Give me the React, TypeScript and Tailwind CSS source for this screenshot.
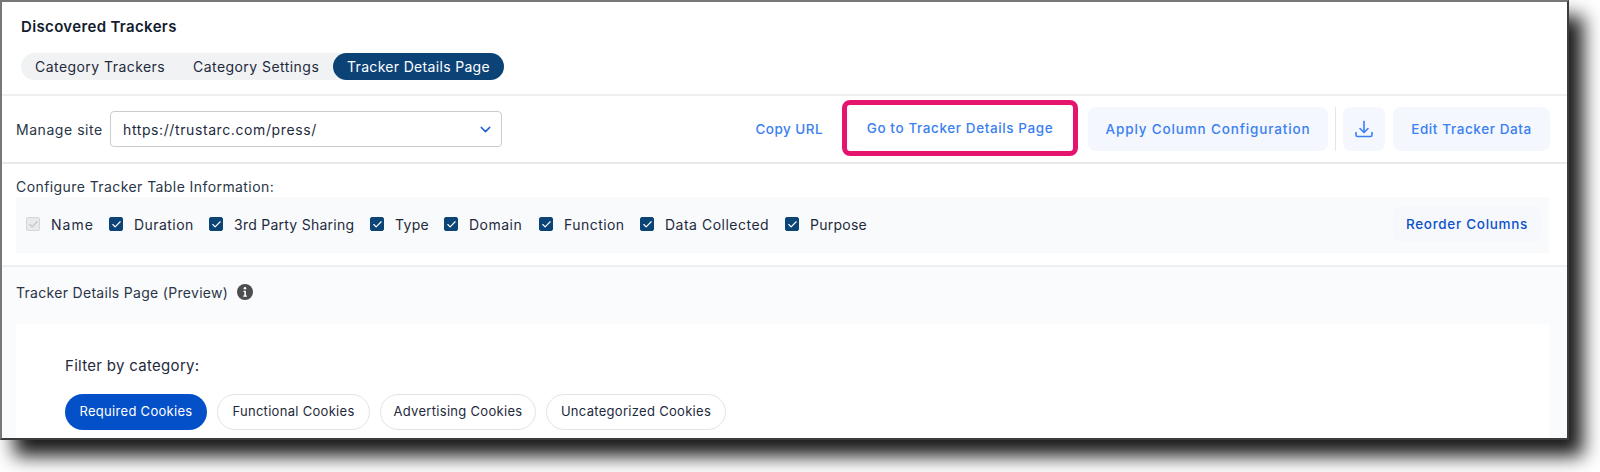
import { Check, ChevronDown } from 'lucide-react';

const columns = [
  { label: 'Name', locked: true, width: 'w-[42px]', tracking: 'tracking-[1px]' },
  { label: 'Duration', width: 'w-[59px]', tracking: 'tracking-[0.45px]' },
  { label: '3rd Party Sharing', width: 'w-[120px]', tracking: 'tracking-[0.25px]' },
  { label: 'Type', width: 'w-[33px]', tracking: 'tracking-[0.3px]' },
  { label: 'Domain', width: 'w-[54px]', tracking: 'tracking-[0.5px]' },
  { label: 'Function', width: 'w-[60px]', tracking: 'tracking-[0.45px]' },
  { label: 'Data Collected', width: 'w-[104px]', tracking: 'tracking-[0.5px]' },
  { label: 'Purpose', width: 'w-[57px]', tracking: 'tracking-[0.25px]' },
];

const filters = [
  { label: 'Required Cookies', width: 'w-[142px]', active: true },
  { label: 'Functional Cookies', width: 'w-[153px]' },
  { label: 'Advertising Cookies', width: 'w-[156px]' },
  { label: 'Uncategorized Cookies', width: 'w-[180px]' },
];

function ColumnCheckbox({ locked }: { locked?: boolean }) {
  return (
    <span
      className={`flex h-[14px] w-[14px] shrink-0 items-center justify-center rounded-[2px] border ${
        locked ? 'border-[#d4d6da] bg-[#e9eaec]' : 'border-[#0d4477] bg-[#0d4477]'
      }`}
    >
      <Check className={`h-[11px] w-[11px] ${locked ? 'text-[#c0c3c8]' : 'text-white'}`} strokeWidth={2.5} />
    </span>
  );
}

export default function App() {
  return (
    <div className="h-[472px] w-[1600px] overflow-hidden bg-white font-['Inter',sans-serif] text-[14px] text-[#1e2a3c]">
      <div className="h-[440px] w-[1569px] overflow-hidden border-2 border-t-[#777777] border-r-[#3c3c3c] border-b-[#3c3c3c] border-l-[#777777] bg-white shadow-[14px_16px_18px_rgba(0,0,0,0.9)]">
        {/* Header */}
        <div className="border-b-2 border-[#eeeff1] px-[19px] pt-[15px] pb-[14px]">
          <h1 className="h-[20px] text-[15px] leading-[20px] font-semibold tracking-[0.35px] text-[#131c2e]">
            Discovered Trackers
          </h1>
          <div className="mt-[16px] flex h-[27px] w-[483px] items-center rounded-full bg-[#f1f2f3] pl-[14px] tracking-[0.45px]">
            <span className="w-[158px]">Category Trackers</span>
            <span className="w-[140px]">Category Settings</span>
            <span className="flex h-[27px] w-[171px] items-center justify-center rounded-full bg-[#0b4377] tracking-[0.32px] text-white">
              Tracker Details Page
            </span>
          </div>
        </div>

        {/* Site toolbar */}
        <div className="flex h-[68px] items-center border-b-2 border-[#e9eaec] pr-[17px] pl-[14px]">
          <span className="w-[94px] tracking-[0.55px] text-[#2a3547]">Manage site</span>
          <div className="flex h-[36px] w-[392px] items-center justify-between rounded-[4px] border border-[#c9ccd1] pr-[7px] pl-[12px] tracking-[0.6px]">
            <span>https://trustarc.com/press/</span>
            <ChevronDown className="h-[17px] w-[17px] text-[#1d5fd0]" strokeWidth={2} />
          </div>
          <div className="ml-auto flex items-center text-[13.5px] font-medium text-[#3a80f0]">
            <button className="mr-[19px] tracking-[0.45px]">Copy URL</button>
            <div className="mb-[2px] flex h-[56px] w-[236px] items-center justify-center rounded-[8px] border-[5px] border-[#e5156f] tracking-[0.6px]">
              Go to Tracker Details Page
            </div>
            <button className="ml-[10px] h-[44px] w-[240px] rounded-[8px] bg-[#f4f7fe] tracking-[0.85px]">Apply Column Configuration</button>
            <span className="mx-[7px] h-[44px] w-[1px] bg-[#e4e6e9]" />
            <button className="flex h-[44px] w-[42px] items-center justify-center rounded-[8px] bg-[#f4f7fe]">
              <svg width="20" height="20" viewBox="0 0 20 20" fill="none" stroke="#3a80f0" strokeWidth="1.6" strokeLinecap="round" strokeLinejoin="round">
                <path d="M10 2.5v10.5" />
                <path d="M6 9.5l4 4 4-4" />
                <path d="M2 13.5v2.5a1.5 1.5 0 0 0 1.5 1.5h13a1.5 1.5 0 0 0 1.5-1.5v-2.5" />
              </svg>
            </button>
            <button className="ml-[8px] h-[44px] w-[157px] rounded-[8px] bg-[#f4f7fe] tracking-[0.6px]">Edit Tracker Data</button>
          </div>
        </div>

        {/* Column configuration */}
        <div className="border-b-2 border-[#eeeff1] pr-[18px] pb-[12px] pl-[14px]">
          <div className="flex h-[33px] items-center pt-[12px] text-[14px] tracking-[0.42px] text-[#2a3547]">
            Configure Tracker Table Information:
          </div>
          <div className="flex h-[56px] items-center bg-[#f9fafc] pr-[8px] pb-[2px] pl-[10px]">
            {columns.map((column) => (
              <div key={column.label} className="mr-[16px] flex items-center gap-[11px] whitespace-nowrap">
                <ColumnCheckbox locked={column.locked} />
                <span className={`${column.width} ${column.tracking}`}>{column.label}</span>
              </div>
            ))}
            <button className="ml-auto h-[36px] w-[148px] rounded-[6px] bg-[#f7f8fb] text-[13.5px] font-medium tracking-[0.7px] text-[#0b52c9]">
              Reorder Columns
            </button>
          </div>
        </div>

        {/* Preview */}
        <div className="h-[200px] bg-[#fafbfd] pr-[18px] pl-[14px]">
          <div className="flex h-[57px] items-center gap-[9px] pb-[7px] tracking-[0.3px] text-[#2a3547]">
            <span>Tracker Details Page (Preview)</span>
            <svg width="16" height="16" viewBox="0 0 16 16">
              <circle cx="8" cy="8" r="8" fill="#4b4d50" />
              <circle cx="8" cy="4.3" r="1.3" fill="#ffffff" />
              <path d="M6.4 6.7h2.5v4.8h1v1.2H6.2v-1.2h1.1V7.9h-.9z" fill="#ffffff" />
            </svg>
          </div>
          <div className="h-[120px] bg-white pt-[31px] pl-[49px]">
            <div className="h-[22px] text-[15px] leading-[22px] tracking-[0.3px]">Filter by category:</div>
            <div className="mt-[17px] flex gap-[10px]">
              {filters.map((filter) => (
                <span
                  key={filter.label}
                  className={`flex h-[36px] items-center justify-center rounded-full text-[13px] tracking-[0.3px] ${filter.width} ${
                    filter.active ? 'bg-[#0450c8] text-white' : 'border border-[#e2e3e6] text-[#1e2a3c]'
                  }`}
                >
                  {filter.label}
                </span>
              ))}
            </div>
          </div>
        </div>
      </div>
    </div>
  );
}
